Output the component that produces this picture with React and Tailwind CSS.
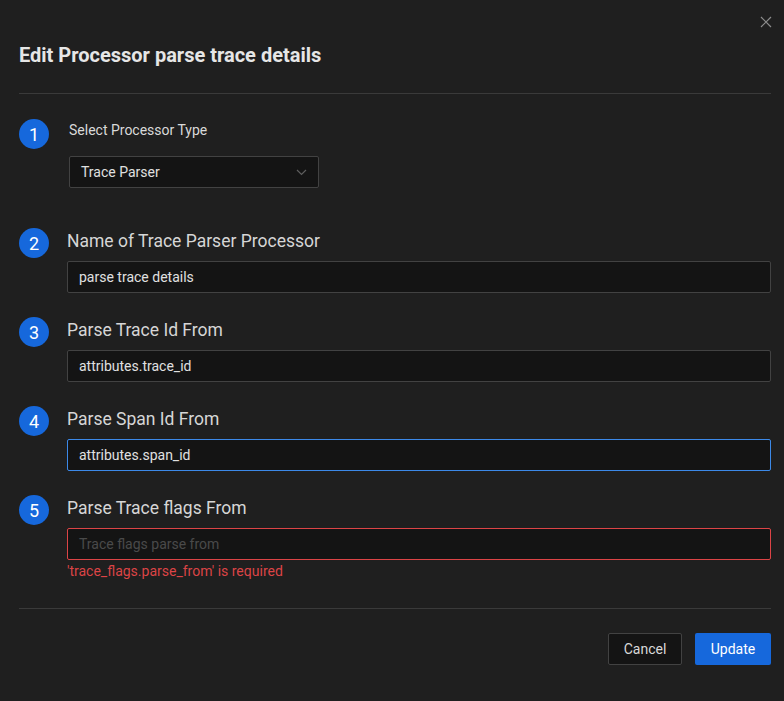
import React from 'react'

const Step = ({ n, label, small, children }) => (
  <div className="flex">
    <div className="w-[48px] shrink-0">
      <div className="w-[30px] h-[30px] rounded-full bg-[#1668dc] flex items-center justify-center text-white text-[18px]">
        {n}
      </div>
    </div>
    <div className="flex-1 min-w-0">
      {small ? (
        <p className="ml-[2px] text-[14px] leading-[22px] text-[#d9d9d9]">{label}</p>
      ) : (
        <p className="text-[17.5px] leading-[26px] text-[#d6d6d6]">{label}</p>
      )}
      {children}
    </div>
  </div>
)

const Field = ({ value, placeholder, state }) => {
  const border =
    state === 'focus'
      ? 'border-[#3c89e8]'
      : state === 'error'
      ? 'border-[#dc4446]'
      : 'border-[#424242]'
  return (
    <div className={`mt-[7px] h-[32px] rounded-[2px] border bg-[#141414] px-[11px] flex items-center text-[14px] ${border}`}>
      {value ? (
        <span className="text-[#e0e0e0]">{value}</span>
      ) : (
        <span className="text-[#4a4a4a]">{placeholder}</span>
      )}
    </div>
  )
}

export default function App() {
  return (
    <div className="w-[784px] h-[701px] bg-[#1f1f1f] relative" style={{ fontFamily: 'Roboto, "Liberation Sans", sans-serif' }}>
      <button className="absolute right-[11px] top-[15px] w-[14px] h-[14px] flex items-center justify-center">
        <svg width="12" height="12" viewBox="0 0 12 12" fill="none" stroke="#8c8c8c" strokeWidth="1.2">
          <path d="M1 1 L11 11 M11 1 L1 11" />
        </svg>
      </button>

      <div className="pl-[19px] pr-[13px]">
        <h1 className="pt-[41px] text-[20px] leading-[28px] font-bold text-[#e6e6e6]">
          Edit Processor parse trace details
        </h1>
        <div className="mt-[24px] h-px bg-[#3a3a3a]" />

        <div className="pt-[25px] flex flex-col">
          <Step n={1} label="Select Processor Type" small>
            <div className="ml-[2px] mt-[15px] w-[250px] h-[32px] rounded-[2px] border border-[#424242] bg-[#141414] pl-[11px] pr-[11px] flex items-center justify-between text-[14px] text-[#e0e0e0]">
              <span>Trace Parser</span>
              <svg width="11" height="7" viewBox="0 0 11 7" fill="none" stroke="#5e5e5e" strokeWidth="1.2">
                <path d="M1 1 L5.5 5.5 L10 1" />
              </svg>
            </div>
          </Step>

          <div className="mt-[40px]">
            <Step n={2} label="Name of Trace Parser Processor">
              <Field value="parse trace details" />
            </Step>
          </div>
          <div className="mt-[24px]">
            <Step n={3} label="Parse Trace Id From">
              <Field value="attributes.trace_id" />
            </Step>
          </div>
          <div className="mt-[24px]">
            <Step n={4} label="Parse Span Id From">
              <Field value="attributes.span_id" state="focus" />
            </Step>
          </div>
          <div className="mt-[24px]">
            <Step n={5} label="Parse Trace flags From">
              <Field placeholder="Trace flags parse from" state="error" />
              <p className="text-[14px] leading-[22px] text-[#dc4446]">
                'trace_flags.parse_from' is required
              </p>
            </Step>
          </div>
        </div>

        <div className="mt-[26px] h-px bg-[#3a3a3a]" />

        <div className="mt-[24px] flex justify-end gap-[13px]">
          <button className="h-[32px] w-[74px] rounded-[2px] border border-[#424242] bg-[#141414] text-[14px] text-[#d9d9d9]">
            Cancel
          </button>
          <button className="h-[32px] w-[76px] rounded-[2px] bg-[#1668dc] text-[14px] text-white">
            Update
          </button>
        </div>
      </div>
    </div>
  )
}
